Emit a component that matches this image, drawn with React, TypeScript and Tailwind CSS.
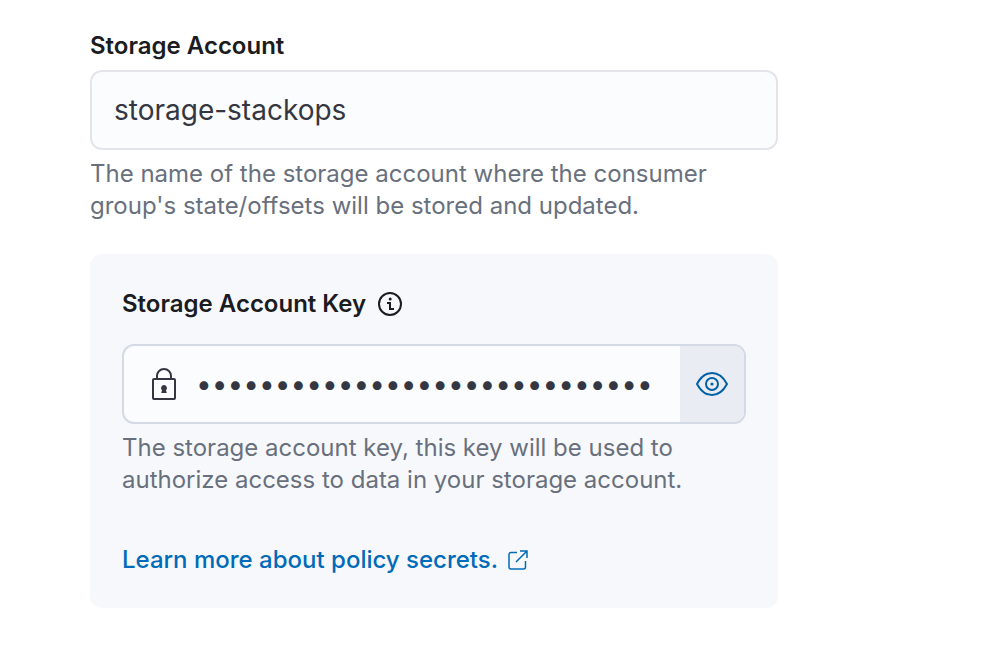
import { useState } from "react";

const INPUT_CLASS =
  "min-w-0 flex-1 bg-transparent text-[28px] leading-10 text-[#343741] outline-none";
const HELP_CLASS = "mt-2 text-2xl leading-8 text-[#69707d]";
const TITLE_CLASS = "text-2xl leading-8 font-semibold text-[#1a1c21]";

function InfoIcon() {
  return (
    <svg width="24" height="24" viewBox="0 0 24 24" fill="none" stroke="currentColor" strokeWidth="2" aria-hidden="true">
      <circle cx="12" cy="12" r="11" />
      <path d="M9 11h3v6M11 17h5" />
      <circle cx="12.200" cy="7" r="1.500" fill="currentColor" stroke="none" />
    </svg>
  );
}

function LockIcon() {
  return (
    <svg className="shrink-0" width="32" height="32" viewBox="0 0 32 32" fill="none" stroke="#343741" strokeWidth="2" aria-hidden="true">
      <rect x="5" y="11" width="22" height="20" rx="1" />
      <path d="M9 11V8a7 7 0 0 1 14 0v3" />
      <path d="M16 17a3 3 0 0 0-2 5.200l-.8 2.800h5.600l-.8-2.800a3 3 0 0 0-2-5.200z" fill="#343741" stroke="none" />
    </svg>
  );
}

function EyeIcon() {
  return (
    <svg width="32" height="32" viewBox="0 0 32 32" fill="none" stroke="currentColor" strokeWidth="2" aria-hidden="true">
      <path d="M1 16C5 8.500 10 5 16 5s11 3.500 15 11c-4 7.500-9 11-15 11S5 23.500 1 16z" strokeLinejoin="round" />
      <circle cx="16" cy="16" r="6" />
      <circle cx="16" cy="16" r="1.600" fill="currentColor" stroke="none" />
    </svg>
  );
}

function ExternalIcon() {
  return (
    <svg width="20" height="20" viewBox="0 0 20 20" fill="none" stroke="currentColor" strokeWidth="1.500" aria-hidden="true">
      <path d="M9 2.500H3a2 2 0 0 0-2 2V17a2 2 0 0 0 2 2h12.500a2 2 0 0 0 2-2v-6" />
      <path d="M12 1h7v7M19 1 8 12" />
    </svg>
  );
}

function App() {
  const [account, setAccount] = useState("storage-stackops");
  const [secret, setSecret] = useState("x".repeat(29));
  const [visible, setVisible] = useState(false);

  return (
    <main className="bg-white pt-[30px] pr-56 pb-10 pl-[90px] font-['Inter',sans-serif]">
      <section>
        <label htmlFor="account" className={`block ${TITLE_CLASS}`}>
          Storage Account
        </label>
        <div className="mt-2 flex h-20 items-center rounded-xl border-2 border-[#e3e5ea] bg-[#fbfcfd] px-[22px]">
          <input
            id="account"
            type="text"
            value={account}
            onChange={(e) => setAccount(e.target.value)}
            className={INPUT_CLASS}
          />
        </div>
        <p className={HELP_CLASS}>
          The name of the storage account where the consumer group's
          state/offsets will be stored and updated.
        </p>
      </section>

      <section className="mt-8 rounded-xl bg-[#f7f8fc] px-8 pt-[34px] pb-8">
        <div className="flex items-center gap-3">
          <label htmlFor="key" className={TITLE_CLASS}>
            Storage Account Key
          </label>
          <button type="button" aria-label="About this secret" className="text-[#1a1c21]">
            <InfoIcon />
          </button>
        </div>
        <div className="mt-6 flex h-20 items-center overflow-hidden rounded-xl border-2 border-[#d3dae6] bg-[#fbfcfd]">
          <div className="flex min-w-0 flex-1 items-center gap-4 pl-6">
            <LockIcon />
            <input
              id="key"
              type={visible ? "text" : "password"}
              value={secret}
              onChange={(e) => setSecret(e.target.value)}
              className={INPUT_CLASS}
            />
          </div>
          <button
            type="button"
            aria-label="Show key"
            onClick={() => setVisible(!visible)}
            className="flex w-16 shrink-0 items-center justify-center self-stretch bg-[#e9edf3] text-[#0061a6]"
          >
            <EyeIcon />
          </button>
        </div>
        <p className={HELP_CLASS}>
          The storage account key, this key will be used to authorize access to
          data in your storage account.
        </p>
        <a
          href="#"
          className="mt-12 flex items-center gap-[10px] text-2xl leading-8 font-medium text-[#006bb8]"
        >
          Learn more about policy secrets.
          <ExternalIcon />
        </a>
      </section>
    </main>
  );
}

export default App;
